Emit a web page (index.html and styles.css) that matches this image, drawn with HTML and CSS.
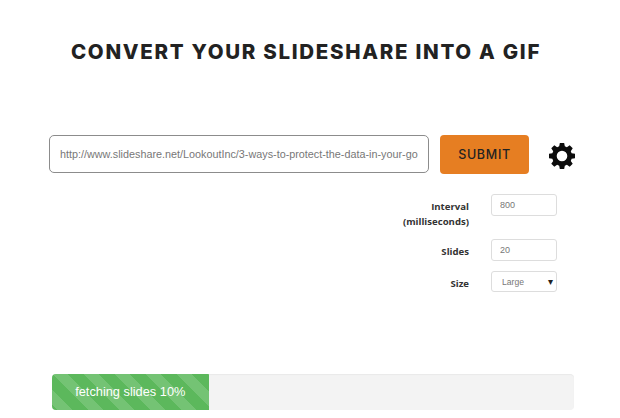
FILE: index.html
```html
<!DOCTYPE html>
<html lang="en">
<head>
  <meta charset="UTF-8">
  <title>Slideshare to GIF</title>
  <link rel="stylesheet" href="styles.css">
</head>
<body>
  <h1 class="title">CONVERT YOUR SLIDESHARE INTO A GIF</h1>

  <div class="url-row">
    <input class="url-input" type="text" value="http://www.slideshare.net/LookoutInc/3-ways-to-protect-the-data-in-your-go">
    <button class="submit">SUBMIT</button>
    <svg class="gear" viewBox="0 0 24 24">
      <path fill-rule="evenodd" d="M10 0h4l.6 3.1 1.9.8L19.1 2.1 21.9 4.9l-1.8 2.6.8 1.9L24 10v4l-3.1.6-.8 1.9 1.8 2.6-2.8 2.8-2.6-1.8-1.9.8L14 24h-4l-.6-3.1-1.9-.8-2.6 1.8-2.8-2.8 1.8-2.6-.8-1.9L0 14v-4l3.1-.6.8-1.9-1.8-2.6 2.8-2.8 2.6 1.8 1.9-.8zM12 7.1a4.9 4.9 0 1 0 0 9.8 4.9 4.9 0 0 0 0-9.8z"/>
    </svg>
  </div>

  <div class="options">
    <div class="option option-tall">
      <label class="option-label">Interval<br>(milliseconds)</label>
      <input class="option-input" type="text" value="800">
    </div>
    <div class="option">
      <label class="option-label">Slides</label>
      <input class="option-input" type="text" value="20">
    </div>
    <div class="option">
      <label class="option-label">Size</label>
      <div class="option-select">
        <span>Large</span>
        <span class="arrow">▾</span>
      </div>
    </div>
  </div>

  <div class="progress">
    <div class="progress-bar" style="width: 30%">fetching slides 10%</div>
  </div>
</body>
</html>
```

FILE: styles.css
```css
html, body {
  margin: 0;
  height: 418px;
  overflow: hidden;
  background: #fff;
}
body {
  font-family: "Liberation Sans", Arial, sans-serif;
  color: #222;
}
.title {
  margin: 0;
  padding-top: 40px;
  padding-right: 8px;
  height: 95px;
  box-sizing: border-box;
  text-align: center;
  font-family: Inter, sans-serif;
  font-size: 20.5px;
  line-height: 24px;
  font-weight: 800;
  letter-spacing: 1.7px;
  color: #222;
}
.url-row {
  display: flex;
  align-items: flex-start;
  margin-top: 40px;
  padding-left: 49px;
}
.url-input {
  width: 380px;
  height: 38px;
  box-sizing: border-box;
  padding: 0 10px;
  border: 1px solid #8c8c8c;
  border-radius: 5px;
  font-family: "Liberation Sans", Arial, sans-serif;
  font-size: 10.8px;
  color: #777;
}
.submit {
  width: 89px;
  height: 39px;
  margin-left: 11px;
  border: 0;
  border-radius: 4px;
  background: #e67e22;
  font-family: Inter, sans-serif;
  font-size: 12.5px;
  font-weight: 500;
  letter-spacing: 0.7px;
  color: #222;
}
.gear {
  margin: 8px 0 0 20px;
  width: 26px;
  height: 26px;
  fill: #0c0c0c;
}
.options {
  display: flex;
  flex-direction: column;
  margin-top: 20px;
}
.option {
  display: flex;
  align-items: flex-start;
  height: 32px;
}
.option-tall {
  height: 45px;
}
.option-label {
  width: 469px;
  box-sizing: border-box;
  padding-top: 5px;
  text-align: right;
  font-family: "Open Sans", sans-serif;
  font-size: 9.6px;
  line-height: 15px;
  font-weight: 700;
  color: #333;
}
.option-input {
  width: 66px;
  height: 22px;
  box-sizing: border-box;
  margin-left: 22px;
  padding: 0 8px;
  border: 1px solid #ddd;
  border-radius: 3px;
  font-family: "Liberation Sans", Arial, sans-serif;
  font-size: 9px;
  color: #777;
}
.option-select {
  display: flex;
  align-items: center;
  justify-content: space-between;
  width: 66px;
  height: 21px;
  box-sizing: border-box;
  margin-left: 22px;
  padding: 0 3px 0 10px;
  border: 1px solid #ddd;
  border-radius: 3px;
  font-size: 8.6px;
  color: #777;
}
.arrow {
  font-size: 10px;
  color: #222;
}
.progress {
  width: 522px;
  height: 36px;
  margin: 71px 0 0 52px;
  border-radius: 4px;
  background: #f3f3f3;
  box-shadow: inset 0 1px 1px rgba(0,0,0,0.04);
  overflow: hidden;
}
.progress-bar {
  height: 100%;
  text-align: center;
  font-size: 12.8px;
  line-height: 36px;
  color: #fff;
  background-color: #5cb85c;
  background-image: linear-gradient(45deg, rgba(255,255,255,.15) 25%, transparent 25%, transparent 50%, rgba(255,255,255,.15) 50%, rgba(255,255,255,.15) 75%, transparent 75%, transparent);
  background-size: 31px 31px;
}
```
